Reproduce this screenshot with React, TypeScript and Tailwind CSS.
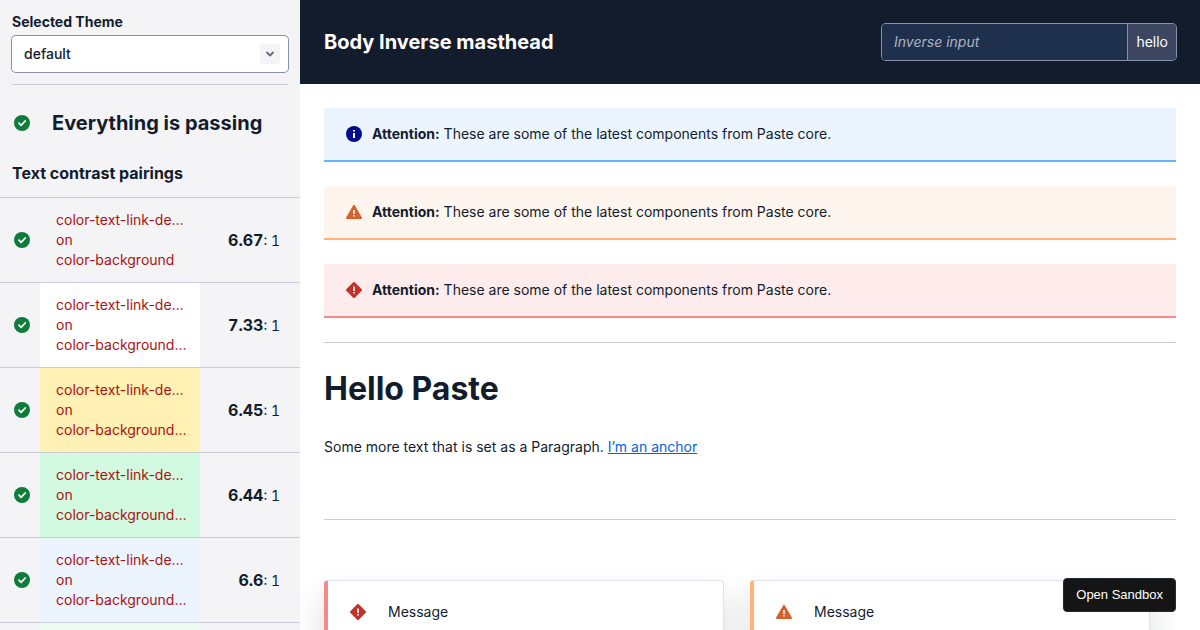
import type { ReactNode } from "react";
import { useState } from "react";

type Variant = "info" | "warning" | "error";

const alerts: { variant: Variant; className: string }[] = [
  { variant: "info", className: "bg-[#ebf4ff] border-[#66b3ff]" },
  { variant: "warning", className: "bg-[#fef5ee] border-[#ffb37a]" },
  { variant: "error", className: "bg-[#feecec] border-[#f58a8a]" },
];

const pairings = [
  { background: "color-background", score: "6.67", swatch: "" },
  { background: "color-background-body", score: "7.33", swatch: "bg-white" },
  { background: "color-background-busy", score: "6.45", swatch: "bg-[#fff0b3]" },
  { background: "color-background-new", score: "6.44", swatch: "bg-[#d1fae0]" },
  { background: "color-background-primary", score: "6.6", swatch: "bg-[#ebf4ff]" },
  { background: "color-background-success", score: "6.9", swatch: "bg-[#edfdf3]" },
];

const messages: { variant: Variant; className: string }[] = [
  { variant: "error", className: "border-l-[#f58a8a]" },
  { variant: "warning", className: "border-l-[#ffb37a]" },
];

const Icon = ({ className, children }: { className: string; children: ReactNode }) => (
  <svg
    viewBox="0 0 20 20"
    aria-hidden="true"
    className={`size-5 shrink-0 fill-current ${className}`}
  >
    {children}
  </svg>
);

const SuccessIcon = () => (
  <Icon className="text-[#0e7c3a]">
    <circle cx="10" cy="10" r="8" />
    <path
      d="M7 10.2l2.1 2.1L13.2 8"
      fill="none"
      stroke="white"
      strokeWidth="1.8"
      strokeLinecap="round"
      strokeLinejoin="round"
    />
  </Icon>
);

const StatusIcon = ({ variant }: { variant: Variant }) => {
  if (variant === "info") {
    return (
      <Icon className="text-[#030b8c]">
        <circle cx="10" cy="10" r="8" />
        <path d="M9 6h2v1.5H9zM9 9h2v5H9z" fill="white" />
      </Icon>
    );
  }
  if (variant === "warning") {
    return (
      <Icon className="text-[#d6612f]">
        <path d="M9.1 3.5a1.05 1.05 0 011.8 0l7 12c.4.7-.1 1.5-.9 1.5H3c-.8 0-1.3-.8-.9-1.5z" />
        <path d="M9.2 8h1.6v4H9.2zM9.2 13h1.6v1.6H9.2z" fill="white" />
      </Icon>
    );
  }
  return (
    <Icon className="text-[#c2322d]">
      <path d="M9.2 2.3a1.15 1.15 0 011.6 0l6.9 6.9a1.15 1.15 0 010 1.6l-6.9 6.9a1.15 1.15 0 01-1.6 0l-6.9-6.9a1.15 1.15 0 010-1.6z" />
      <path d="M9.2 6.5h1.6V11H9.2zM9.2 12h1.6v1.6H9.2z" fill="white" />
    </Icon>
  );
};

const Sidebar = () => {
  const [theme, setTheme] = useState("default");

  return (
    <aside className="w-[300px] shrink-0 overflow-hidden bg-[#f4f4f6]">
      <div className="px-3 pt-3">
        <label htmlFor="theme" className="block text-sm font-bold">
          Selected Theme
        </label>
        <div className="relative mt-1">
          <select
            id="theme"
            value={theme}
            onChange={(e) => setTheme(e.target.value)}
            className="block h-9 w-full appearance-none rounded bg-white px-3 text-sm font-medium ring-1 ring-[#8891aa]"
          >
            <option value="default">default</option>
            <option value="dark">dark</option>
          </select>
          <span className="pointer-events-none absolute top-2 right-2 flex size-5 items-center justify-center rounded bg-[#f4f4f6]">
            <svg viewBox="0 0 10 10" aria-hidden="true" className="size-2.5">
              <path
                d="M2 3.5l3 3 3-3"
                fill="none"
                stroke="#606b85"
                strokeWidth="1.8"
                strokeLinecap="round"
                strokeLinejoin="round"
              />
            </svg>
          </span>
        </div>
        <hr className="mt-3 border-[#cacdd8]" />
        <div className="mt-6 flex items-center gap-5">
          <SuccessIcon />
          <h2 className="text-xl font-bold">Everything is passing</h2>
        </div>
        <h3 className="mt-6 mb-3 text-base font-bold">Text contrast pairings</h3>
      </div>
      <ul>
        {pairings.map((pair) => (
          <li key={pair.background} className="flex border-t border-[#cacdd8]">
            <div className="flex w-10 shrink-0 items-center pl-3">
              <SuccessIcon />
            </div>
            <div
              className={`w-40 shrink-0 py-3 pr-3 pl-4 text-sm text-[#ad1111] ${pair.swatch}`}
            >
              <p className="truncate">color-text-link-destructive</p>
              <p>on</p>
              <p className="truncate">{pair.background}</p>
            </div>
            <div className="flex flex-1 items-center justify-end pr-5">
              <p className="text-sm tabular-nums">
                <strong className="text-base font-bold">{pair.score}</strong>: 1
              </p>
            </div>
          </li>
        ))}
      </ul>
    </aside>
  );
};

const App = () => {
  return (
    <div className="flex h-screen overflow-hidden font-['Inter','Liberation_Sans',sans-serif] text-[#121c2d]">
      <Sidebar />

      <div className="min-w-0 flex-1 overflow-hidden bg-white">
        <header className="flex items-center justify-between bg-[#121c2d] p-6">
          <h2 className="text-xl font-bold text-white">Body Inverse masthead</h2>
          <div className="flex h-9 w-[294px] overflow-hidden rounded text-sm ring-1 ring-[#8891aa]">
            <input
              type="text"
              aria-label="Inverse input"
              placeholder="Inverse input"
              className="min-w-0 flex-1 bg-[#1f304c] px-3 text-white placeholder:text-[#aeb2c1] placeholder:italic"
            />
            <div className="flex items-center border-l border-[#8891aa] bg-[#3d4661] px-2 text-white">
              hello
            </div>
          </div>
        </header>

        <main className="p-6">
          <div className="flex flex-col gap-6">
            {alerts.map((alert) => (
              <div
                key={alert.variant}
                role="alert"
                className={`flex items-center gap-2 border-b-2 px-5 py-4 text-sm ${alert.className}`}
              >
                <StatusIcon variant={alert.variant} />
                <p>
                  <strong className="font-bold">Attention:</strong> These are some of the latest
                  components from Paste core.
                </p>
              </div>
            ))}
          </div>

          <hr className="my-6 border-[#cacdd8]" />

          <h1 className="text-[32px] leading-[44px] font-bold">Hello Paste</h1>
          <p className="mt-6 text-sm leading-6">
            Some more text that is set as a Paragraph.{" "}
            <a href="#anchor" className="text-[#0263e0] underline">
              I’m an anchor
            </a>
          </p>

          <hr className="my-15 border-[#cacdd8]" />

          <div className="grid grid-cols-2">
            {messages.map((message) => (
              <div
                key={message.variant}
                className={`mr-[26px] flex min-h-16 items-center gap-5 rounded border border-l-4 border-[#e1e3ea] bg-white p-5 text-sm shadow-[0_16px_32px_rgba(18,28,45,0.15)] ${message.className}`}
              >
                <StatusIcon variant={message.variant} />
                <p>Message</p>
              </div>
            ))}
          </div>
        </main>
      </div>

      <button
        type="button"
        className="fixed right-6 bottom-[18px] rounded border border-[#242a38] bg-[#151515] px-3 py-2 font-['Liberation_Sans',Arial,sans-serif] text-[13px] leading-4 text-white"
      >
        Open Sandbox
      </button>
    </div>
  );
};

export default App;
